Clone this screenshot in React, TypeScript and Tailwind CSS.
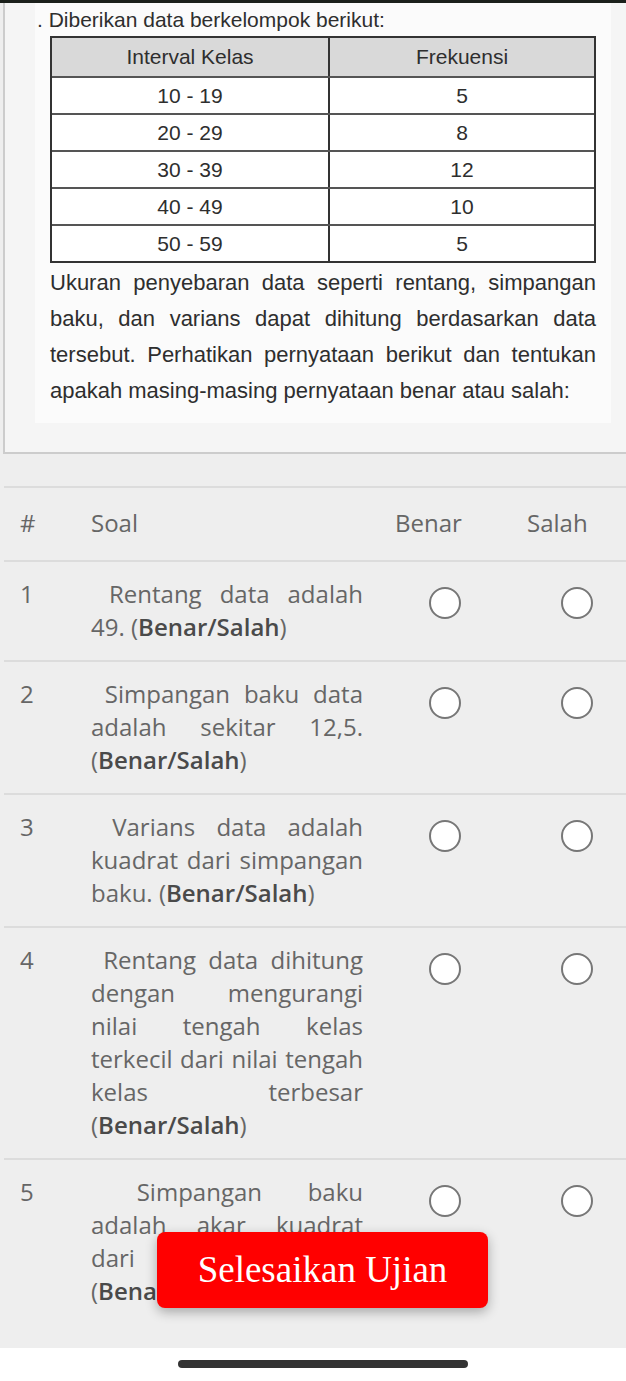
import React from "react";

// Soal benar/salah – tampilan ujian pada ponsel

const DATA = [
  { kelas: "10 - 19", f: "5" },
  { kelas: "20 - 29", f: "8" },
  { kelas: "30 - 39", f: "12" },
  { kelas: "40 - 49", f: "10" },
  { kelas: "50 - 59", f: "5" },
];

const SOAL = [
  "Rentang data adalah 49.",
  "Simpangan baku data adalah sekitar 12,5.",
  "Varians data adalah kuadrat dari simpangan baku.",
  "Rentang data dihitung dengan mengurangi nilai tengah kelas terkecil dari nilai tengah kelas terbesar",
  "Simpangan baku adalah akar kuadrat dari varians.",
];

function Radio() {
  return (
    <div className="mx-auto mt-[10px] w-[32px] h-[32px] rounded-full border-2 border-[#777] bg-white" />
  );
}

function GambarSoal() {
  return (
    <div className="bg-[#fbfbfb] px-[15px] pt-[3px] pb-[14px] text-[#2e2e2e] font-['Liberation_Sans_Narrow','Arial_Narrow','Liberation_Sans',sans-serif]">
      <div className="-ml-[13px] text-[21px] leading-[28px]">. Diberikan data berkelompok berikut:</div>
      <div className="mt-[2px] border-2 border-[#333] text-[21px]">
        <div className="grid grid-cols-[278px_1fr] bg-[#d9d9d9] h-[38px] items-center text-center">
          <div className="border-r-2 border-[#333] h-full flex items-center justify-center">Interval Kelas</div>
          <div>Frekuensi</div>
        </div>
        {DATA.map((d) => (
          <div key={d.kelas} className="grid grid-cols-[278px_1fr] h-[37px] border-t-2 border-[#555] text-center bg-white">
            <div className="border-r-2 border-[#333] flex items-center justify-center">{d.kelas}</div>
            <div className="flex items-center justify-center">{d.f}</div>
          </div>
        ))}
      </div>
      <p className="mt-[2px] text-[22px] leading-[36px] text-justify">
        Ukuran penyebaran data seperti rentang, simpangan baku, dan varians dapat dihitung berdasarkan data
        tersebut. Perhatikan pernyataan berikut dan tentukan apakah masing-masing pernyataan benar atau salah:
      </p>
    </div>
  );
}

export default function App() {
  return (
    <div className="relative w-[626px] h-[1381px] overflow-hidden bg-[#eeeeee] font-['Open_Sans',sans-serif] text-[#666]">
      <div className="h-[3px] bg-[#1b201b]" />

      {/* kotak gambar soal */}
      <div className="ml-[3px] border-l-2 border-b-2 border-[#cccccc] bg-[#f5f5f5] pl-[30px] pr-[15px] pb-[29px]">
        <GambarSoal />
      </div>

      {/* tabel pernyataan */}
      <div className="ml-[4px] mt-[32px] w-[639px] text-[24px] leading-[33px]">
        <div className="grid grid-cols-[71px_304px_132px_132px] border-t-2 border-[#dcdcdc] pt-[18px] pb-[21px]">
          <div className="px-[16px]">#</div>
          <div className="px-[16px]">Soal</div>
          <div className="px-[16px]">Benar</div>
          <div className="px-[16px]">Salah</div>
        </div>
        {SOAL.map((s, i) => (
          <div
            key={i}
            className="grid grid-cols-[71px_304px_132px_132px] border-t-2 border-[#dcdcdc] pt-[15px] pb-[17px]"
          >
            <div className="px-[16px]">{i + 1}</div>
            <div className="px-[16px] text-justify">
              {"\u00a0"}
              {s} (<span className="font-semibold text-[#4a4a4a]">Benar/Salah</span>)
            </div>
            <div className="px-[16px]">
              <Radio />
            </div>
            <div className="px-[16px]">
              <Radio />
            </div>
          </div>
        ))}
      </div>

      {/* tombol mengambang */}
      <button className="absolute left-[157px] top-[1232px] w-[331px] h-[76px] rounded-[8px] bg-[#ff0000] text-white text-[37px] font-['Liberation_Serif',serif] shadow-[0_4px_12px_rgba(0,0,0,0.3)]">
        Selesaikan Ujian
      </button>

      {/* bilah navigasi */}
      <div className="absolute left-0 right-0 top-[1348px] h-[33px] bg-white">
        <div className="ml-[178px] mt-[12px] w-[290px] h-[8px] rounded-full bg-[#333]" />
      </div>
    </div>
  );
}
